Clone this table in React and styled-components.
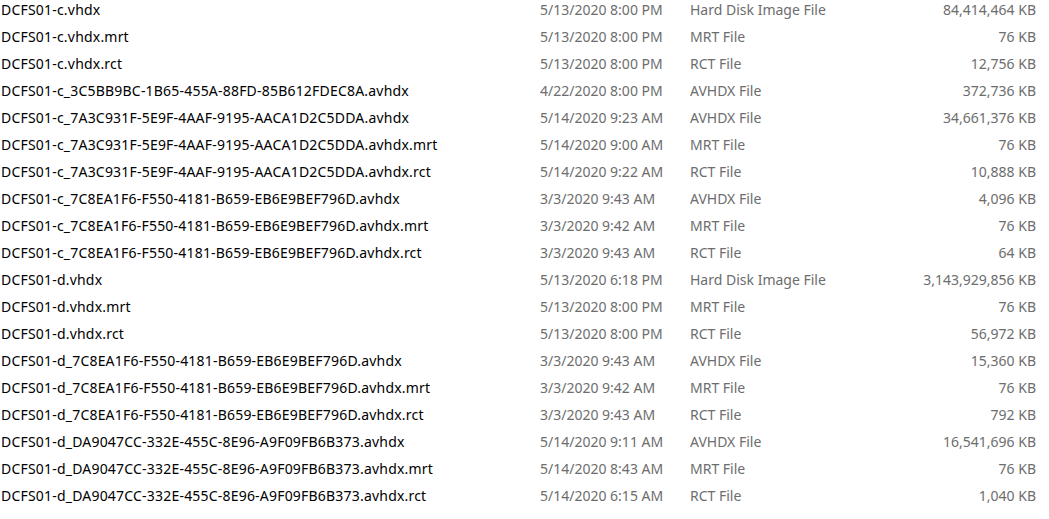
import React from "react";
import styled, { createGlobalStyle } from "styled-components";

const Global = createGlobalStyle`
  html, body { margin: 0; padding: 0; background: #fff; overflow: hidden; }
  body { font-family: "Segoe UI", "Noto Sans", "Open Sans", sans-serif; }
`;

const List = styled.div`
  display: flex;
  flex-direction: column;
  margin-top: -4px;
`;

const Row = styled.div`
  display: grid;
  grid-template-columns: 540px 150px 180px 166px;
  height: 27px;
  align-items: center;
  font-size: 14px;
  white-space: nowrap;
`;

const Cell = styled.div`
  color: ${(p) => (p.$primary ? "#000" : "#6d6d6d")};
  text-align: ${(p) => (p.$right ? "right" : "left")};
  padding-left: ${(p) => (p.$primary ? "1px" : "0")};
  letter-spacing: ${(p) => (p.$primary ? "0.2px" : "0")};
  overflow: hidden;
`;

const files = [
  ["DCFS01-c.vhdx", "5/13/2020 8:00 PM", "Hard Disk Image File", "84,414,464 KB"],
  ["DCFS01-c.vhdx.mrt", "5/13/2020 8:00 PM", "MRT File", "76 KB"],
  ["DCFS01-c.vhdx.rct", "5/13/2020 8:00 PM", "RCT File", "12,756 KB"],
  ["DCFS01-c_3C5BB9BC-1B65-455A-88FD-85B612FDEC8A.avhdx", "4/22/2020 8:00 PM", "AVHDX File", "372,736 KB"],
  ["DCFS01-c_7A3C931F-5E9F-4AAF-9195-AACA1D2C5DDA.avhdx", "5/14/2020 9:23 AM", "AVHDX File", "34,661,376 KB"],
  ["DCFS01-c_7A3C931F-5E9F-4AAF-9195-AACA1D2C5DDA.avhdx.mrt", "5/14/2020 9:00 AM", "MRT File", "76 KB"],
  ["DCFS01-c_7A3C931F-5E9F-4AAF-9195-AACA1D2C5DDA.avhdx.rct", "5/14/2020 9:22 AM", "RCT File", "10,888 KB"],
  ["DCFS01-c_7C8EA1F6-F550-4181-B659-EB6E9BEF796D.avhdx", "3/3/2020 9:43 AM", "AVHDX File", "4,096 KB"],
  ["DCFS01-c_7C8EA1F6-F550-4181-B659-EB6E9BEF796D.avhdx.mrt", "3/3/2020 9:42 AM", "MRT File", "76 KB"],
  ["DCFS01-c_7C8EA1F6-F550-4181-B659-EB6E9BEF796D.avhdx.rct", "3/3/2020 9:43 AM", "RCT File", "64 KB"],
  ["DCFS01-d.vhdx", "5/13/2020 6:18 PM", "Hard Disk Image File", "3,143,929,856 KB"],
  ["DCFS01-d.vhdx.mrt", "5/13/2020 8:00 PM", "MRT File", "76 KB"],
  ["DCFS01-d.vhdx.rct", "5/13/2020 8:00 PM", "RCT File", "56,972 KB"],
  ["DCFS01-d_7C8EA1F6-F550-4181-B659-EB6E9BEF796D.avhdx", "3/3/2020 9:43 AM", "AVHDX File", "15,360 KB"],
  ["DCFS01-d_7C8EA1F6-F550-4181-B659-EB6E9BEF796D.avhdx.mrt", "3/3/2020 9:42 AM", "MRT File", "76 KB"],
  ["DCFS01-d_7C8EA1F6-F550-4181-B659-EB6E9BEF796D.avhdx.rct", "3/3/2020 9:43 AM", "RCT File", "792 KB"],
  ["DCFS01-d_DA9047CC-332E-455C-8E96-A9F09FB6B373.avhdx", "5/14/2020 9:11 AM", "AVHDX File", "16,541,696 KB"],
  ["DCFS01-d_DA9047CC-332E-455C-8E96-A9F09FB6B373.avhdx.mrt", "5/14/2020 8:43 AM", "MRT File", "76 KB"],
  ["DCFS01-d_DA9047CC-332E-455C-8E96-A9F09FB6B373.avhdx.rct", "5/14/2020 6:15 AM", "RCT File", "1,040 KB"],
];

export default function App() {
  return (
    <>
      <Global />
      <List>
        {files.map(([name, date, type, size]) => (
          <Row key={name}>
            <Cell $primary>{name}</Cell>
            <Cell>{date}</Cell>
            <Cell>{type}</Cell>
            <Cell $right>{size}</Cell>
          </Row>
        ))}
      </List>
    </>
  );
}
